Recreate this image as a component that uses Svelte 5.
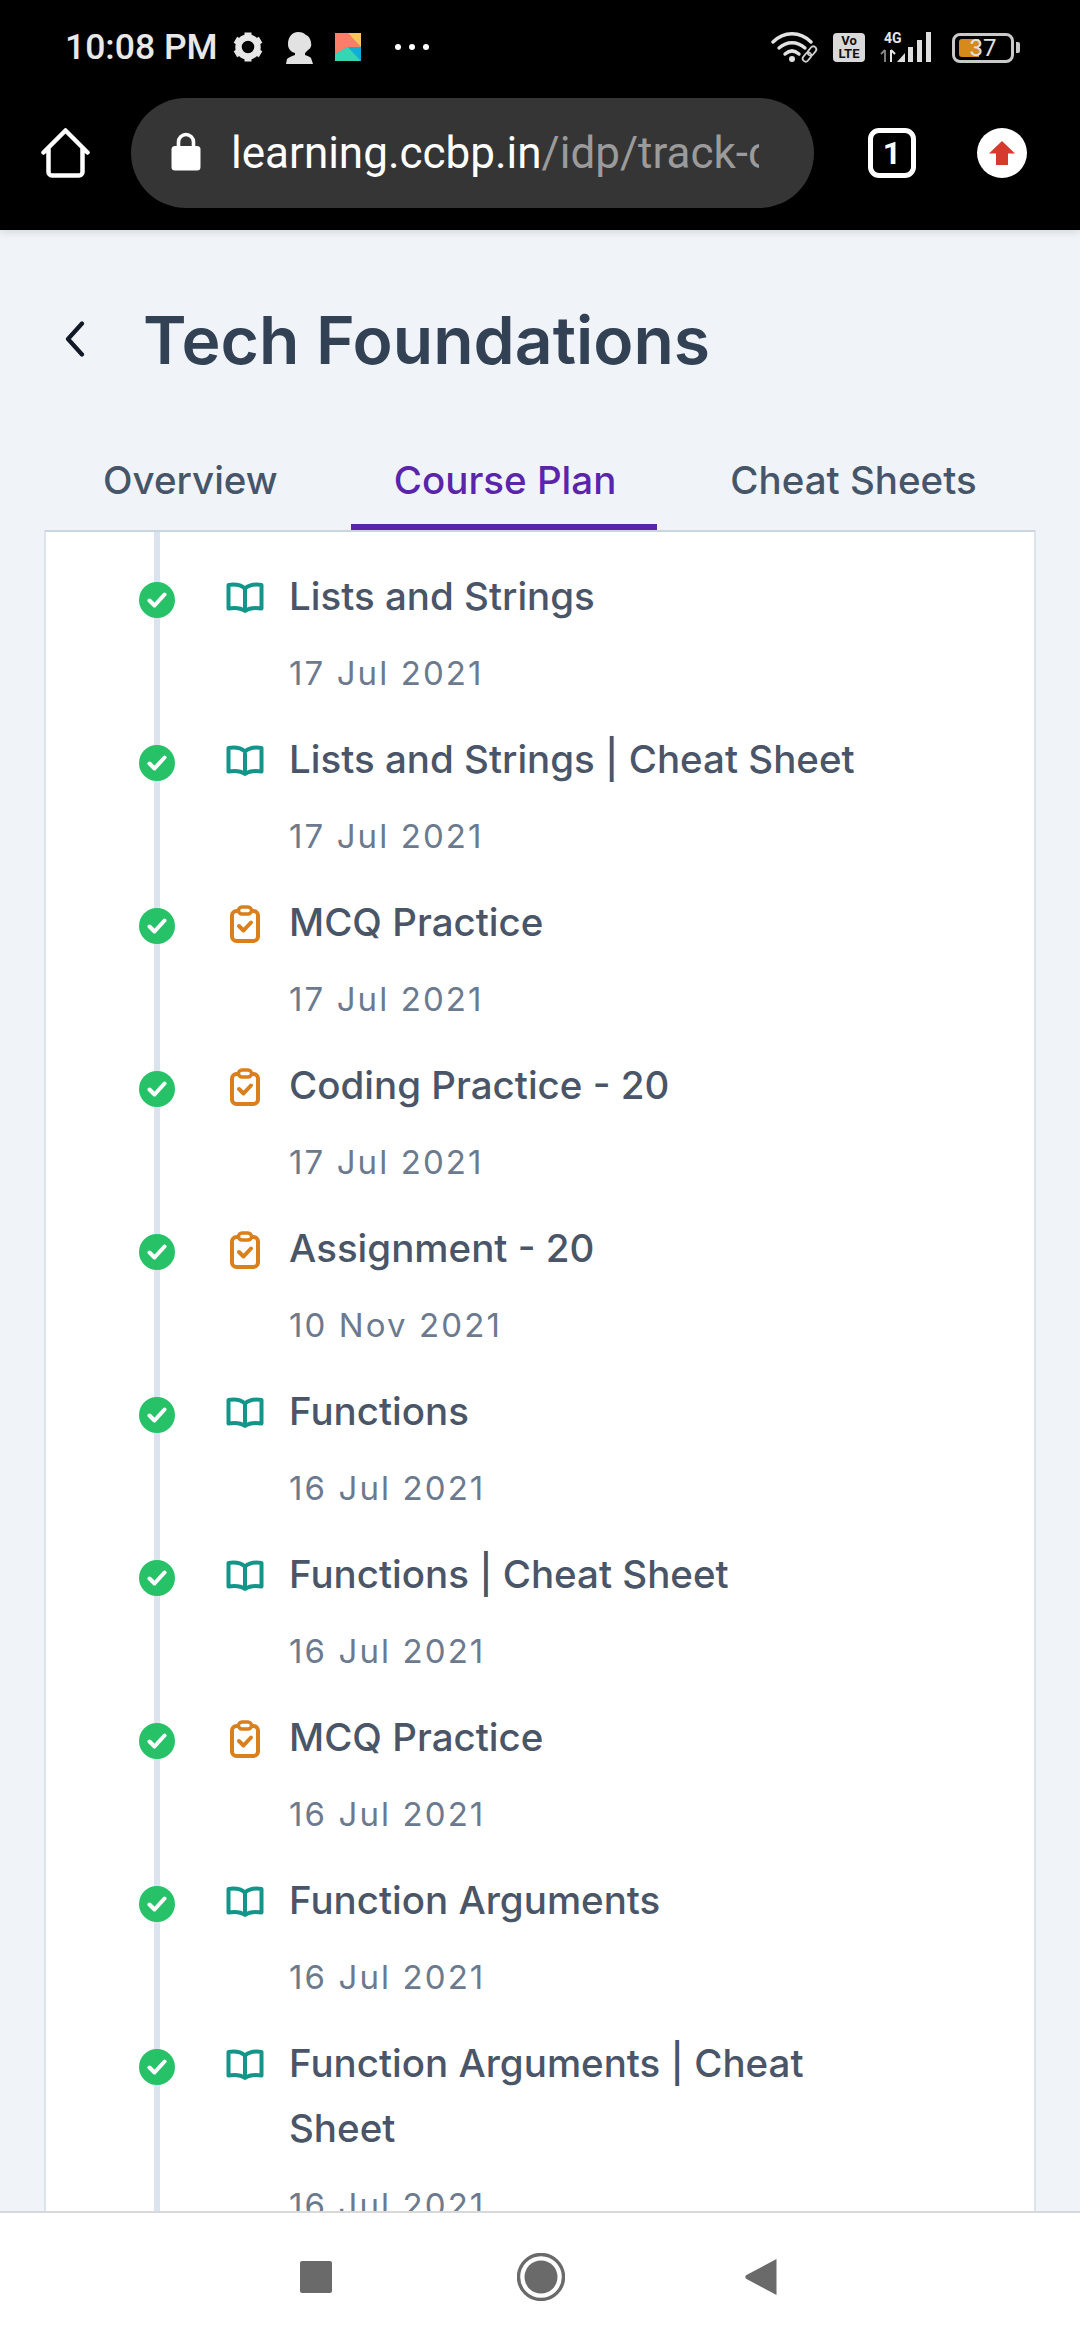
<script lang="ts">
  type Row = { title: string; date: string; kind: 'book' | 'task' };

  const rows: Row[] = [
    { title: 'Lists and Strings', date: '17 Jul 2021', kind: 'book' },
    { title: 'Lists and Strings | Cheat Sheet', date: '17 Jul 2021', kind: 'book' },
    { title: 'MCQ Practice', date: '17 Jul 2021', kind: 'task' },
    { title: 'Coding Practice - 20', date: '17 Jul 2021', kind: 'task' },
    { title: 'Assignment - 20', date: '10 Nov 2021', kind: 'task' },
    { title: 'Functions', date: '16 Jul 2021', kind: 'book' },
    { title: 'Functions | Cheat Sheet', date: '16 Jul 2021', kind: 'book' },
    { title: 'MCQ Practice', date: '16 Jul 2021', kind: 'task' },
    { title: 'Function Arguments', date: '16 Jul 2021', kind: 'book' },
    { title: 'Function Arguments | Cheat Sheet', date: '16 Jul 2021', kind: 'book' }
  ];
</script>

<div class="phone">
  <header class="chrome">
    <div class="status">
      <span class="time">10:08 PM</span>
      <svg class="gear" width="30" height="30" viewBox="0 0 30 30" aria-hidden="true">
        <circle cx="15" cy="15" r="9.500" fill="none" stroke="#e6e6e6" stroke-width="6.500"/>
        <path d="M15 0.500v5M15 24.500v5M2.400 7.800l4.300 2.500M23.300 19.700l4.300 2.500M2.400 22.200l4.300-2.500M23.300 10.300l4.300-2.500" stroke="#e6e6e6" stroke-width="7"/>
      </svg>
      <svg class="avatar" width="30" height="33" viewBox="0 0 30 33" aria-hidden="true">
        <path d="M14 1c4 0 6 1 8 3 3 1 5 5 5 8 1 3-1 6-3 7l-3 3 0 2c3 1 5 2 6 3l2 6H2l1-5c2-2 5-3 8-4v-2c-4-1-7-4-7-9C4 6 8 1 14 1z" fill="#e2e2e2"/>
      </svg>
      <svg class="kite" width="26" height="28" viewBox="0 0 26 28" aria-hidden="true">
        <rect width="26" height="28" rx="1" fill="#12aed6"/>
        <polygon points="0,0 13,0 26,14 13,14 0,21" fill="#fb7f68"/>
        <polygon points="13,0 26,0 26,14" fill="#fbc35c"/>
        <polygon points="0,21 13,14 26,28 0,28" fill="#34d6b4"/>
        <polygon points="13,14 26,14 26,28" fill="#12aed6"/>
      </svg>
      <span class="dots"><i></i><i></i><i></i></span>
      <span class="spacer"></span>
      <svg class="wifi" width="48" height="32" viewBox="0 0 48 32" aria-hidden="true">
        <g fill="none" stroke="#e2e2e2" stroke-width="3.400" stroke-linecap="round">
          <path d="M2 11C13 0 29 0 40 11"/>
          <path d="M8 17c8-7 18-7 26 0"/>
          <path d="M14 23c4.500-4 9.500-4 14 0"/>
        </g>
        <circle cx="21" cy="28" r="3" fill="#e2e2e2"/>
        <g fill="none" stroke="#cfcfcf" stroke-width="1.800">
          <rect x="38" y="15" width="6" height="10" rx="3" transform="rotate(40 41 20)"/>
          <rect x="33" y="21" width="6" height="10" rx="3" transform="rotate(40 36 26)"/>
        </g>
      </svg>
      <div class="volte"><span>Vo</span><span>LTE</span></div>
      <div class="signal">
        <span class="net">4G</span>
        <svg width="56" height="31" viewBox="0 0 56 31" aria-hidden="true">
          <path d="M6 18v12M2 22l4-4" stroke="#8a8a8a" stroke-width="1.800" fill="none"/>
          <path d="M12 18v12M12 18l4 4" stroke="#e6e6e6" stroke-width="2" fill="none"/>
          <polygon points="18,30 26,30 26,21" fill="#dedede"/>
          <rect x="29" y="15" width="5" height="15" fill="#dedede"/>
          <rect x="38" y="8" width="5" height="22" fill="#dedede"/>
          <rect x="47" y="0" width="5" height="30" fill="#dedede"/>
        </svg>
      </div>
      <div class="battery">
        <div class="cell">
          <span class="fill"></span>
          <span class="pct">37</span>
        </div>
        <span class="nub"></span>
      </div>
    </div>

    <div class="toolbar">
      <svg class="home" width="49" height="50" viewBox="0 0 49 50" aria-hidden="true">
        <path d="M2.500 24.500L24.500 2.500l22 22M7.500 20v24a3.500 3.500 0 0 0 3.500 3.500h27a3.500 3.500 0 0 0 3.500-3.500V20" fill="none" stroke="#fff" stroke-width="4.500" stroke-linecap="round" stroke-linejoin="round"/>
      </svg>
      <div class="pill">
        <svg class="lock" width="30" height="39" viewBox="0 0 30 39" aria-hidden="true">
          <path d="M7.500 16v-6a7.500 7.500 0 0 1 15 0v6" fill="none" stroke="#fff" stroke-width="3.600"/>
          <rect x="0.500" y="14" width="29" height="24.500" rx="3.500" fill="#fff"/>
        </svg>
        <div class="url">learning.ccbp.in<span>/idp/track-courses</span></div>
      </div>
      <div class="tabcount">1</div>
      <div class="update">
        <svg width="26" height="24" viewBox="0 0 26 24" aria-hidden="true">
          <polygon points="13,0 26,12.500 19,12.500 19,24 7,24 7,12.500 0,12.500" fill="#d63a2f"/>
        </svg>
      </div>
    </div>
  </header>

  <main class="page">
    <div class="heading">
      <svg class="back" width="20" height="36" viewBox="0 0 20 36" aria-hidden="true">
        <path d="M17 2.500L3 18l14 15.500" fill="none" stroke="#111827" stroke-width="4.200" stroke-linecap="round" stroke-linejoin="round"/>
      </svg>
      <h1>Tech Foundations</h1>
    </div>

    <nav class="tabs">
      <span class="tab">Overview</span>
      <span class="tab active">Course Plan</span>
      <span class="tab">Cheat Sheets</span>
    </nav>

    <section class="card">
      <ul class="timeline">
        {#each rows as row}
          <li class="row">
            <span class="done">
              <svg width="20" height="16" viewBox="0 0 20 16" aria-hidden="true">
                <path d="M2.500 8.500l5 5L17.500 2.500" fill="none" stroke="#fff" stroke-width="4" stroke-linecap="round" stroke-linejoin="round"/>
              </svg>
            </span>
            <span class="kind">
              {#if row.kind === 'book'}
                <svg width="38" height="32" viewBox="0 0 38 32" aria-hidden="true">
                  <path d="M19 6.500C15 3 9 2 2.500 3v23.500C9 25.500 15 26 19 29c4-3 10-3.500 16.500-2.500V3C29 2 23 3 19 6.500zM19 6.500V29" fill="none" stroke="#14958a" stroke-width="4" stroke-linejoin="round" stroke-linecap="round"/>
                </svg>
              {:else}
                <svg width="32" height="38" viewBox="0 0 32 38" aria-hidden="true">
                  <rect x="3" y="6" width="26" height="30" rx="4.500" fill="none" stroke="#d97f1c" stroke-width="4"/>
                  <rect x="9.500" y="2" width="13" height="7" rx="3.500" fill="#fff" stroke="#d97f1c" stroke-width="3.400"/>
                  <path d="M10 21l4.500 4.500L22 17.500" fill="none" stroke="#d97f1c" stroke-width="4" stroke-linecap="round" stroke-linejoin="round"/>
                </svg>
              {/if}
            </span>
            <div class="text">
              <p class="title">{row.title}</p>
              <p class="date">{row.date}</p>
            </div>
          </li>
        {/each}
      </ul>
    </section>
  </main>

  <footer class="navbar">
    <span class="square"></span>
    <svg width="48" height="48" viewBox="0 0 48 48" aria-hidden="true">
      <circle cx="24" cy="24" r="22.500" fill="none" stroke="#6a6a6a" stroke-width="3.400"/>
      <circle cx="24" cy="24" r="16.500" fill="#6a6a6a"/>
    </svg>
    <svg width="32" height="38" viewBox="0 0 32 38" aria-hidden="true">
      <path d="M31.500 1L1.500 17a2.300 2.300 0 0 0 0 4l30 16z" fill="#6a6a6a"/>
    </svg>
  </footer>
</div>

<style>
  :global(body) {
    margin: 0;
    background: #f0f4f9;
  }

  .phone {
    width: 1080px;
    height: 2340px;
    display: flex;
    flex-direction: column;
    overflow: hidden;
    background: #f0f4f9;
    font-family: Inter, "Liberation Sans", sans-serif;
  }

  .chrome {
    height: 230px;
    flex-shrink: 0;
    background: #000;
    box-shadow: 0 2px 8px rgba(0, 0, 0, 0.12);
    position: relative;
    z-index: 1;
  }

  .status {
    height: 94px;
    display: flex;
    align-items: center;
    padding-left: 65px;
    box-sizing: border-box;
    font-family: Roboto, sans-serif;
  }

  .time {
    font-size: 35.5px;
    font-weight: 500;
    color: #e8e8e8;
    width: 168px;
    white-space: nowrap;
  }

  .avatar { margin-left: 21px; }
  .kite { margin-left: 21px; }

  .dots {
    display: flex;
    gap: 8px;
    margin-left: 34px;
  }

  .dots i {
    width: 6px;
    height: 6px;
    border-radius: 50%;
    background: #fff;
  }

  .spacer { flex: 1; }

  .volte {
    width: 32px;
    height: 29px;
    margin-left: 14px;
    margin-top: 1px;
    padding-top: 1px;
    box-sizing: border-box;
    border-radius: 4px;
    background: #d9d9d9;
    color: #111;
    font-size: 13px;
    font-weight: 700;
    line-height: 13px;
    display: flex;
    flex-direction: column;
    align-items: center;
  }

  .signal {
    position: relative;
    width: 56px;
    height: 31px;
    margin-left: 14px;
    margin-top: 1px;
  }

  .net {
    position: absolute;
    left: 5px;
    top: -1px;
    font-size: 14px;
    line-height: 14px;
    font-weight: 700;
    color: #e6e6e6;
  }

  .battery {
    display: flex;
    align-items: center;
    gap: 2px;
    margin-left: 17px;
    margin-right: 60px;
    margin-top: 1px;
  }

  .cell {
    position: relative;
    width: 62px;
    height: 30px;
    box-sizing: border-box;
    border: 3px solid #c9c9c9;
    border-radius: 8px;
    display: flex;
    align-items: center;
    justify-content: center;
  }

  .fill {
    position: absolute;
    left: 4px;
    top: 3px;
    bottom: 3px;
    width: 20px;
    border-radius: 3px 0 0 3px;
    background: #d68a1a;
  }

  .pct {
    position: relative;
    font-size: 24px;
    line-height: 24px;
    color: #e2e2e2;
  }

  .nub {
    width: 4px;
    height: 11px;
    border-radius: 0 2px 2px 0;
    background: #c9c9c9;
  }

  .toolbar {
    height: 110px;
    margin-top: 4px;
    display: flex;
    align-items: center;
    font-family: Roboto, sans-serif;
  }

  .home { margin-left: 41px; }

  .pill {
    width: 683px;
    height: 110px;
    margin-left: 41px;
    padding-left: 40px;
    box-sizing: border-box;
    border-radius: 55px;
    background: #353535;
    display: flex;
    align-items: center;
  }

  .lock { margin-top: -4px; }

  .url {
    width: 528px;
    margin-left: 30px;
    overflow: hidden;
    white-space: nowrap;
    font-size: 44px;
    color: #fff;
  }

  .url span { color: #9b9b9b; }

  .tabcount {
    width: 48px;
    height: 50px;
    margin-left: 54px;
    box-sizing: border-box;
    border: 5px solid #fff;
    border-radius: 11px;
    display: flex;
    align-items: center;
    justify-content: center;
    color: #fff;
    font-size: 32px;
    font-weight: 700;
  }

  .update {
    width: 50px;
    height: 50px;
    margin-left: 61px;
    border-radius: 50%;
    background: #fff;
    display: flex;
    align-items: center;
    justify-content: center;
  }

  .page {
    flex: 1;
    min-height: 0;
    display: flex;
    flex-direction: column;
    overflow: hidden;
  }

  .heading {
    height: 220px;
    padding-left: 65px;
    display: flex;
    align-items: center;
    flex-shrink: 0;
  }

  .heading h1 {
    margin: 0 0 0 58px;
    font-size: 66px;
    font-weight: 600;
    color: #334155;
    white-space: nowrap;
  }

  .back { margin-top: -2px; }

  .tabs {
    height: 80px;
    padding-left: 58px;
    display: flex;
    align-items: flex-end;
    flex-shrink: 0;
  }

  .tab {
    padding: 0 44px 18px 45px;
    border-bottom: 6px solid transparent;
    font-size: 38.5px;
    font-weight: 500;
    line-height: 52px;
    color: #475569;
    white-space: nowrap;
  }

  .tab.active {
    color: #5a25ab;
    border-bottom-color: #5a25ab;
    margin: 0 28px 0 29px;
    padding: 0 41px 18px 43px;
  }

  .card {
    flex: 1;
    min-height: 0;
    margin: 0 44px;
    box-sizing: border-box;
    border: 2px solid #dde4ee;
    border-top-color: #cbd5e0;
    border-bottom: none;
    background: #fff;
    overflow: hidden;
  }

  .timeline {
    min-height: 100%;
    margin: 0 0 0 108px;
    padding: 0;
    list-style: none;
    border-left: 6px solid #dbe3ef;
  }

  .row {
    position: relative;
    display: flex;
    padding-top: 32px;
  }

  .done {
    position: absolute;
    left: -21px;
    top: 50px;
    width: 36px;
    height: 36px;
    border-radius: 50%;
    background: #27c267;
    display: flex;
    align-items: center;
    justify-content: center;
  }

  .kind {
    width: 38px;
    height: 38px;
    margin: 15px 0 0 66px;
    display: flex;
    align-items: center;
    justify-content: center;
    flex-shrink: 0;
  }

  .text {
    width: 600px;
    margin-left: 25px;
  }

  .title {
    margin: 0;
    font-size: 38.5px;
    font-weight: 500;
    line-height: 65px;
    color: #4a5568;
  }

  .date {
    margin: 22px 0 0;
    font-size: 33px;
    line-height: 44px;
    letter-spacing: 2.1px;
    color: #6b7a8f;
  }

  .navbar {
    height: 129px;
    flex-shrink: 0;
    box-sizing: border-box;
    border-top: 2px solid #d8d8d8;
    background: #fff;
    display: flex;
    align-items: center;
    position: relative;
    padding-left: 300px;
  }

  .square {
    width: 32px;
    height: 32px;
    border-radius: 2px;
    background: #6a6a6a;
  }

  .navbar svg:nth-of-type(1) { margin-left: 185px; }
  .navbar svg:nth-of-type(2) { margin-left: 180px; }
</style>
